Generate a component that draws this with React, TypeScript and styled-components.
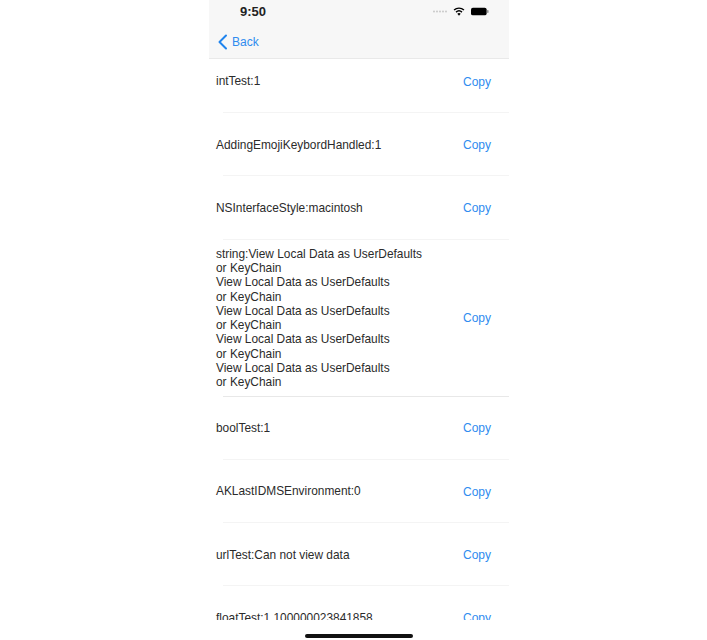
import React from "react";
import styled, { createGlobalStyle } from "styled-components";

const LONG_LINE = "View Local Data as UserDefaults\nor KeyChain";

const rows = [
  { text: "intTest:1", first: true },
  { text: "AddingEmojiKeybordHandled:1" },
  { text: "NSInterfaceStyle:macintosh" },
  {
    text: `string:${LONG_LINE}\n${LONG_LINE}\n${LONG_LINE}\n${LONG_LINE}\n${LONG_LINE}`,
    long: true,
  },
  { text: "boolTest:1" },
  { text: "AKLastIDMSEnvironment:0" },
  { text: "urlTest:Can not view data" },
  { text: "floatTest:1.100000023841858" },
];

const App = () => {
  return (
    <Phone>
      <GlobalStyle />
      <Header>
        <StatusBar>
          <Time>9:50</Time>
          <StatusIcons>
            <svg width="14" height="3" viewBox="0 0 14 3">
              {[1, 4, 7, 10, 13].map((x) => (
                <circle key={x} cx={x} cy="1.5" r="0.9" fill="#c4c4c4" />
              ))}
            </svg>
            <svg width="12" height="9" viewBox="0 0 13 10">
              <path d="M6.5 9.6 4.6 7.4a3 3 0 0 1 3.8 0z" fill="#000" />
              <path
                d="M3.2 5.7a5 5 0 0 1 6.6 0M1 3.4a8.2 8.2 0 0 1 11 0"
                fill="none"
                stroke="#000"
                strokeWidth="1.6"
              />
            </svg>
            <svg width="18" height="9" viewBox="0 0 19 9">
              <rect x="0" y="0.5" width="16.5" height="8" rx="2" fill="#000" />
              <rect x="17" y="3" width="1.5" height="3" rx="0.7" fill="#888" />
            </svg>
          </StatusIcons>
        </StatusBar>
        <NavBar>
          <svg width="11" height="16" viewBox="0 0 11 16">
            <path
              d="M9 1.5 2.5 8 9 14.5"
              fill="none"
              stroke="#1f84ee"
              strokeWidth="2"
              strokeLinecap="round"
              strokeLinejoin="round"
            />
          </svg>
          <BackLabel>Back</BackLabel>
        </NavBar>
      </Header>
      <List>
        {rows.map((row) => (
          <Row key={row.text.slice(0, 12)} $first={row.first} $long={row.long}>
            <RowText>{row.text}</RowText>
            <CopyButton>Copy</CopyButton>
          </Row>
        ))}
      </List>
      <HomeArea>
        <HomeIndicator />
      </HomeArea>
    </Phone>
  );
};

export default App;

const GlobalStyle = createGlobalStyle`
  html, body {
    margin: 0;
    padding: 0;
    background: #ffffff;
    overflow: hidden;
  }
`;

const Phone = styled.div`
  width: 300px;
  height: 640px;
  margin-left: 209px;
  display: flex;
  flex-direction: column;
  overflow: hidden;
  background: #ffffff;
  color: #2b2b2b;
  font-family: "Liberation Sans", Arial, sans-serif;
`;

const Header = styled.div`
  flex: none;
  height: 59px;
  box-sizing: border-box;
  background: #f7f7f7;
  border-bottom: 1px solid #e9e9e9;
`;

const StatusBar = styled.div`
  height: 23px;
  display: flex;
  align-items: center;
  justify-content: space-between;
  padding: 0 20px 0 31px;
`;

const Time = styled.div`
  font-size: 13px;
  font-weight: 700;
  color: #222222;
`;

const StatusIcons = styled.div`
  display: flex;
  align-items: center;
  gap: 6px;
`;

const NavBar = styled.div`
  height: 35px;
  display: flex;
  align-items: center;
  gap: 4px;
  padding-left: 8px;
  padding-top: 3px;
  box-sizing: border-box;
`;

const BackLabel = styled.div`
  font-size: 12px;
  color: #2f8cef;
`;

const List = styled.div`
  flex: 1;
  min-height: 0;
  overflow: hidden;
`;

const Row = styled.div<{ $first?: boolean; $long?: boolean }>`
  position: relative;
  flex: none;
  height: ${(p) => (p.$first ? "54px" : p.$long ? "157px" : "63.3px")};
  box-sizing: border-box;
  padding: ${(p) => (p.$first ? "0 18px 9px 7px" : "0 18px 0 7px")};
  display: flex;
  align-items: center;
  justify-content: space-between;

  &::after {
    content: "";
    position: absolute;
    left: 14px;
    right: 0;
    bottom: 0;
    height: 1px;
    background: ${(p) => (p.$long ? "#e8e8e8" : "#f4f4f4")};
  }
`;

const RowText = styled.div`
  font-size: 11.9px;
  line-height: 14.2px;
  white-space: pre-line;
`;

const CopyButton = styled.div`
  font-size: 12px;
  color: #2f8cef;
`;

const HomeArea = styled.div`
  flex: none;
  height: 20px;
  box-sizing: border-box;
  padding-top: 14px;
  display: flex;
  justify-content: center;
  background: #ffffff;
`;

const HomeIndicator = styled.div`
  width: 108px;
  height: 3.5px;
  border-radius: 2px;
  background: #111111;
`;
